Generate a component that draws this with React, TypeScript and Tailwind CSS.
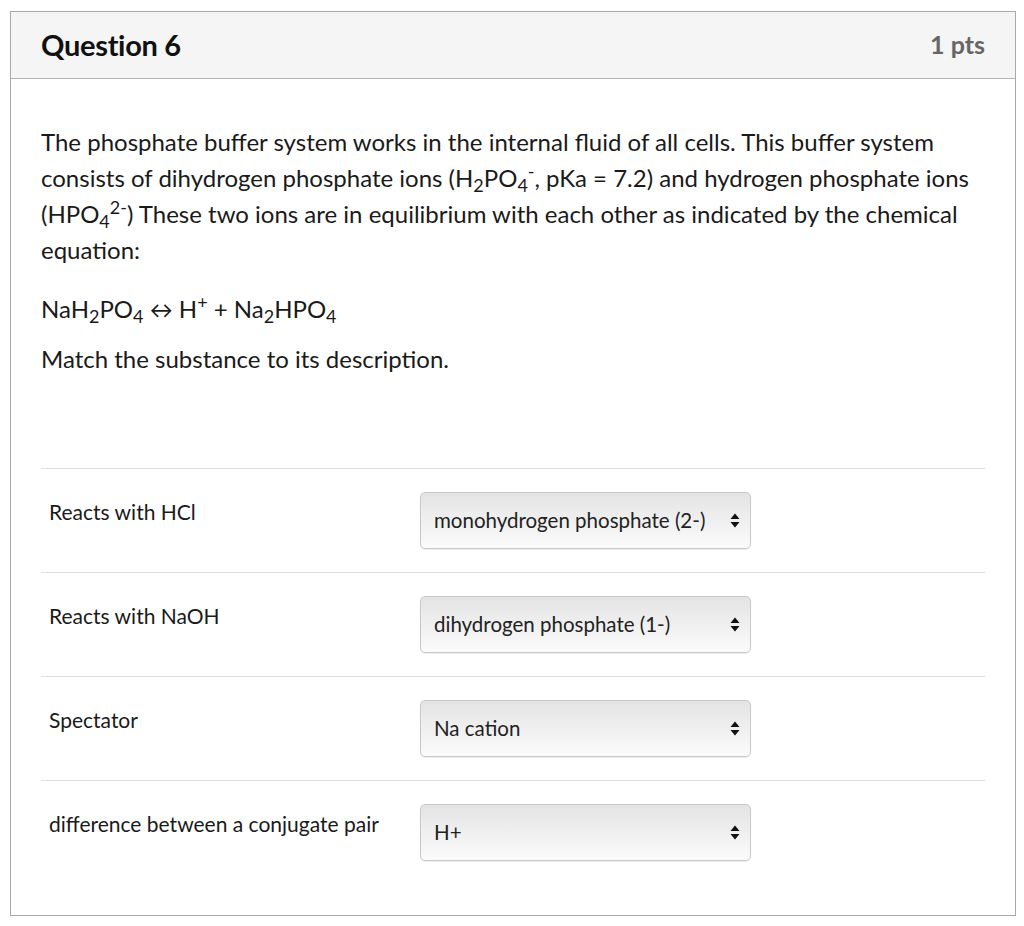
import React from "react";

const rows = [
  { label: "Reacts with HCl", value: "monohydrogen phosphate (2-)" },
  { label: "Reacts with NaOH", value: "dihydrogen phosphate (1-)" },
  { label: "Spectator", value: "Na cation" },
  { label: "difference between a conjugate pair", value: "H+" },
];

function UpDown() {
  return (
    <svg width="10" height="15" viewBox="0 0 10 15" className="shrink-0">
      <path d="M5 0.5 L9.5 6 L0.5 6 Z" fill="#111" />
      <path d="M0.5 9 L9.5 9 L5 14.5 Z" fill="#111" />
    </svg>
  );
}

function FakeSelect({ value }: { value: string }) {
  return (
    <div className="flex h-[57px] w-[331px] items-center justify-between rounded-[5px] border border-[#c9c9c9] bg-gradient-to-b from-[#e4e4e4] to-[#fbfbfb] pl-[13px] pr-[10px] text-[20.5px] text-[#222] shadow-[0_1px_1px_rgba(0,0,0,0.08)]">
      <span className="whitespace-nowrap">{value}</span>
      <UpDown />
    </div>
  );
}

export default function App() {
  return (
    <div className="min-h-[926px] bg-white pl-[10px] pr-[8px] pt-[11px] text-[#1a1a1a]" style={{ fontFamily: "Lato, 'Open Sans', sans-serif" }}>
      <div className="w-[1006px] border border-[#a9a9a9]">
        <div className="flex h-[67px] items-center justify-between border-b border-[#b5b5b5] bg-[#f5f5f5] px-[30px]">
          <h2 className="text-[29px] font-bold tracking-[-0.3px] text-[#111]">Question 6</h2>
          <span className="text-[25px] font-bold text-[#666]">1 pts</span>
        </div>

        <div className="px-[30px] pb-[31px] pt-[45px]">
          <p className="mb-[23px] text-[24px] leading-[36px]">
            The phosphate buffer system works in the internal fluid of all cells. This buffer system consists of
            dihydrogen phosphate ions (H<sub>2</sub>PO<sub>4</sub>
            <sup>-</sup>, pKa = 7.2) and hydrogen phosphate ions (HPO<sub>4</sub>
            <sup>2-</sup>) These two ions are in equilibrium with each other as indicated by the chemical equation:
          </p>
          <p className="mb-[14px] text-[24px] leading-[36px]">
            NaH<sub>2</sub>PO<sub>4</sub> <span className="text-[23px]">↔</span> H<sup>+</sup> + Na<sub>2</sub>HPO
            <sub>4</sub>
          </p>
          <p className="text-[24px] leading-[36px]">Match the substance to its description.</p>

          <div className="mt-[91px]">
            {rows.map((r) => (
              <div key={r.label} className="flex border-t border-[#dedede] py-[23px]">
                <div className="w-[379px] pl-[8px] pt-[6px] text-[21px] leading-[27px]">{r.label}</div>
                <FakeSelect value={r.value} />
              </div>
            ))}
          </div>
        </div>
      </div>
    </div>
  );
}
